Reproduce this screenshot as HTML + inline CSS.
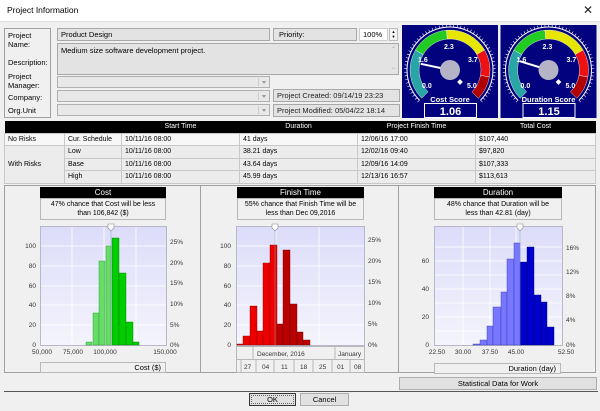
<!DOCTYPE html>
<html><head><meta charset="utf-8"><style>
*{box-sizing:border-box;margin:0;padding:0}
body{width:600px;height:411px;background:#f0f0f0;font-family:"Liberation Sans",Arial,sans-serif;font-size:7.5px;color:#000;position:relative;overflow:hidden}
.a{position:absolute}
.fld{position:absolute;background:#e3e3e3;border:1px solid #a8a8a8;padding:1px 3px;white-space:nowrap}
.cmb{position:absolute;background:#e8e8e8;border:1px solid #b0b0b0}
.cmb:after{content:"";position:absolute;right:1px;top:1px;bottom:1px;width:9px;border-left:1px solid #ccc}
.cmb i{position:absolute;right:3px;top:4px;border:2.5px solid transparent;border-top:3px solid #999}
table{border-collapse:collapse;position:absolute;left:4px;top:121px;width:592px;font-size:7px}
td{border:1px solid #c8c8c8;padding:0 3px;height:12.5px;background:#ececec;white-space:nowrap}
th{background:#000;color:#fff;font-weight:normal;height:12px;text-align:center}
.pan{position:absolute;top:185px;height:188px;border:1px solid #a0a0a0;background:#f0f0f0}
.tt{position:absolute;background:#000;color:#fff;text-align:center;height:11px;line-height:11px;font-size:8px}
.tx{position:absolute;background:#f0f0f0;border:1px solid #b8b8b8;text-align:center;font-size:7px;line-height:9px;padding-top:1px}
.btn{position:absolute;background:#e1e1e1;border:1px solid #adadad;text-align:center;font-size:7.5px;line-height:11px}
</style></head><body>
<div class="a" style="left:0;top:0;width:600px;height:21px;background:#fff"></div>
<div class="a" style="left:7px;top:5px;font-size:8.5px">Project Information</div>
<div class="a" style="left:583px;top:3px;font-size:12px;color:#222">✕</div>
<div class="a" style="left:0;top:21px;width:600px;height:1px;background:#e0e0e0"></div>

<div class="a" style="left:4px;top:28px;width:47px;height:90px;border:1px solid #a0a0a0"></div>
<div class="a" style="left:8px;top:32px;line-height:8.5px">Project<br>Name:</div>
<div class="a" style="left:8px;top:58px">Description:</div>
<div class="a" style="left:8px;top:73px;line-height:8.5px">Project<br>Manager:</div>
<div class="a" style="left:8px;top:93px">Company:</div>
<div class="a" style="left:8px;top:106px">Org.Unit</div>

<div class="fld" style="left:57px;top:28px;width:213px;height:13px">Product Design</div>
<div class="fld" style="left:273px;top:28px;width:84px;height:13px;padding-left:5px">Priority:</div>
<div class="fld" style="left:359px;top:28px;width:29px;height:13px;background:#fff;border-color:#ccc">100%</div>
<div class="a" style="left:389px;top:28px;width:9px;height:13px;border:1px solid #bbb;background:#f4f4f4;font-size:4px;line-height:5px;text-align:center">▲<br>▼</div>
<div class="fld" style="left:57px;top:43px;width:342px;height:32px;padding-top:2px">Medium size software development project.</div>
<div class="a" style="left:391px;top:46px;color:#aaa;font-size:6px">⌃</div>
<div class="a" style="left:391px;top:64px;color:#aaa;font-size:6px">⌄</div>
<div class="cmb" style="left:57px;top:76px;width:213px;height:12px"><i></i></div>
<div class="cmb" style="left:57px;top:90px;width:213px;height:12px"><i></i></div>
<div class="cmb" style="left:57px;top:104px;width:213px;height:12px"><i></i></div>
<div class="fld" style="left:273px;top:89px;width:127px;height:13px;color:#222">Project Created: 09/14/19 23:23</div>
<div class="fld" style="left:273px;top:104px;width:127px;height:13px;color:#222">Project Modified: 05/04/22 18:14</div>

<svg class="a" style="left:402px;top:25px" width="96" height="93" viewBox="0 0 96 93">
<rect width="96" height="93" fill="#02027e"/>
<path d="M17.6 75.4A43 43 0 1 1 78.4 75.4" fill="none" stroke="#fff" stroke-width="1"/>
<path d="M16.5 76.5A44.5 44.5 0 1 1 79.5 76.5" fill="none" stroke="#fff" stroke-width="2.5" stroke-dasharray="0.6 3"/>
<path d="M19.7 73.3A40 40 0 0 1 13.4 25L21.2 29.5A31 31 0 0 0 26.1 66.9Z" fill="#2aa5a5" stroke="#fff" stroke-width=".4"/>
<path d="M13.4 25A40 40 0 0 1 44.5 5.2L45.3 14.1A31 31 0 0 0 21.2 29.5Z" fill="#22cc22" stroke="#fff" stroke-width=".4"/>
<path d="M44.5 5.2A40 40 0 0 1 82.6 25L74.8 29.5A31 31 0 0 0 45.3 14.1Z" fill="#e6e600" stroke="#fff" stroke-width=".4"/>
<path d="M82.6 25A40 40 0 0 1 87.4 52L78.5 50.4A31 31 0 0 0 74.8 29.5Z" fill="#ee1111" stroke="#fff" stroke-width=".4"/>
<path d="M87.4 52A40 40 0 0 1 76.3 73.3L69.9 66.9A31 31 0 0 0 78.5 50.4Z" fill="#b00000" stroke="#fff" stroke-width=".4"/>
<g fill="#fff" font-size="7" font-weight="bold" font-family="Liberation Sans"><text x="20" y="63">0.0</text><text x="16" y="37">1.6</text><text x="42" y="24">2.3</text><text x="66" y="37">3.7</text><text x="65" y="63">5.0</text></g>
<line x1="48" y1="45" x2="18.7" y2="38.8" stroke="#fff" stroke-width="2"/>
<circle cx="48" cy="45" r="10" fill="#b4b4c6"/>
<rect x="56" y="55" width="4" height="4" fill="#fff" transform="rotate(45 58 57)"/>
<text x="48" y="77" fill="#fff" font-size="7.5" font-weight="bold" text-anchor="middle" font-family="Liberation Sans">Cost Score</text>
<rect x="22.5" y="78.5" width="52" height="14" fill="#02027e" stroke="#fff"/>
<text x="48.5" y="90" fill="#fff" font-size="11" font-weight="bold" text-anchor="middle" font-family="Liberation Sans">1.06</text>
</svg>
<svg class="a" style="left:500px;top:25px" width="97" height="93" viewBox="0 0 96 93">
<rect width="96" height="93" fill="#02027e"/>
<path d="M17.6 75.4A43 43 0 1 1 78.4 75.4" fill="none" stroke="#fff" stroke-width="1"/>
<path d="M16.5 76.5A44.5 44.5 0 1 1 79.5 76.5" fill="none" stroke="#fff" stroke-width="2.5" stroke-dasharray="0.6 3"/>
<path d="M19.7 73.3A40 40 0 0 1 13.4 25L21.2 29.5A31 31 0 0 0 26.1 66.9Z" fill="#2aa5a5" stroke="#fff" stroke-width=".4"/>
<path d="M13.4 25A40 40 0 0 1 44.5 5.2L45.3 14.1A31 31 0 0 0 21.2 29.5Z" fill="#22cc22" stroke="#fff" stroke-width=".4"/>
<path d="M44.5 5.2A40 40 0 0 1 82.6 25L74.8 29.5A31 31 0 0 0 45.3 14.1Z" fill="#e6e600" stroke="#fff" stroke-width=".4"/>
<path d="M82.6 25A40 40 0 0 1 87.4 52L78.5 50.4A31 31 0 0 0 74.8 29.5Z" fill="#ee1111" stroke="#fff" stroke-width=".4"/>
<path d="M87.4 52A40 40 0 0 1 76.3 73.3L69.9 66.9A31 31 0 0 0 78.5 50.4Z" fill="#b00000" stroke="#fff" stroke-width=".4"/>
<g fill="#fff" font-size="7" font-weight="bold" font-family="Liberation Sans"><text x="20" y="63">0.0</text><text x="16" y="37">1.6</text><text x="42" y="24">2.3</text><text x="66" y="37">3.7</text><text x="65" y="63">5.0</text></g>
<line x1="48" y1="45" x2="19.3" y2="36.2" stroke="#fff" stroke-width="2"/>
<circle cx="48" cy="45" r="10" fill="#b4b4c6"/>
<rect x="56" y="55" width="4" height="4" fill="#fff" transform="rotate(45 58 57)"/>
<text x="48" y="77" fill="#fff" font-size="7.5" font-weight="bold" text-anchor="middle" font-family="Liberation Sans">Duration Score</text>
<rect x="22.5" y="78.5" width="52" height="14" fill="#02027e" stroke="#fff"/>
<text x="48.5" y="90" fill="#fff" font-size="11" font-weight="bold" text-anchor="middle" font-family="Liberation Sans">1.15</text>
</svg>

<table>
<tr><th style="width:60px;text-align:left"></th><th style="width:57px"></th><th style="width:118px">Start Time</th><th style="width:118px">Duration</th><th style="width:118px">Project Finish Time</th><th>Total Cost</th></tr>
<tr><td style="background:#f7f7f7">No Risks</td><td style="background:#f7f7f7">Cur. Schedule</td><td style="background:#f7f7f7">10/11/16 08:00</td><td style="background:#f7f7f7">41 days</td><td style="background:#f7f7f7">12/06/16 17:00</td><td style="background:#f7f7f7">$107,440</td></tr>
<tr><td rowspan="3">With Risks</td><td>Low</td><td>10/11/16 08:00</td><td>38.21 days</td><td>12/02/16 09:40</td><td>$97,820</td></tr>
<tr><td>Base</td><td>10/11/16 08:00</td><td>43.64 days</td><td>12/09/16 14:09</td><td>$107,333</td></tr>
<tr><td>High</td><td>10/11/16 08:00</td><td>45.99 days</td><td>12/13/16 16:57</td><td>$113,613</td></tr>
</table>

<div class="pan" style="left:4px;width:197px"></div>
<div class="pan" style="left:200px;width:199px"></div>
<div class="pan" style="left:398px;width:198px"></div>

<div class="tt" style="left:40px;top:187px;width:126px">Cost</div>
<div class="tx" style="left:40px;top:198px;width:126px;height:22px">47% chance that Cost will be less<br>than 106,842 ($)</div>
<div class="tt" style="left:237px;top:187px;width:127px">Finish Time</div>
<div class="tx" style="left:237px;top:198px;width:127px;height:22px">55% chance that Finish Time will be<br>less than Dec 09,2016</div>
<div class="tt" style="left:434px;top:187px;width:128px">Duration</div>
<div class="tx" style="left:434px;top:198px;width:128px;height:22px">48% chance that Duration will be<br>less than 42.81 (day)</div>

<svg class="a" style="left:0;top:220px" width="600" height="160" font-family="Liberation Sans" font-size="6.5">
<defs><linearGradient id="bg" x1="0" y1="0" x2="0" y2="1"><stop offset="0" stop-color="#dcdcfa"/><stop offset="1" stop-color="#f4f4fc"/></linearGradient></defs>
<!-- cost -->
<rect x="40.5" y="6.5" width="126" height="119" fill="url(#bg)" stroke="#b8b8c8"/>
<g stroke="#fff" stroke-width=".8"><path d="M72 7V125M104 7V125M136 7V125M41 105H166M41 85H166M41 66H166M41 46H166M41 26H166"/></g>
<g fill="#66dd66" stroke="#229922" stroke-width=".4"><rect x="86" y="122" width="6" height="3"/><rect x="93" y="93" width="6" height="32"/><rect x="99" y="41" width="6" height="84"/><rect x="106" y="26" width="5" height="99"/></g>
<g fill="#00cc00" stroke="#007700" stroke-width=".4"><rect x="112" y="18" width="7" height="107"/><rect x="119" y="53" width="7" height="72"/><rect x="126" y="102" width="7" height="23"/><rect x="133" y="122" width="6" height="3"/></g>
<line x1="111" y1="7" x2="111" y2="125" stroke="#8ab" stroke-width=".5"/>
<path d="M108 4h6v4l-3 3l-3-3z" fill="#fff" stroke="#888" stroke-width=".6"/>
<g text-anchor="end" fill="#333"><text x="36" y="127">0</text><text x="36" y="107">20</text><text x="36" y="87">40</text><text x="36" y="68">60</text><text x="36" y="48">80</text><text x="36" y="28">100</text></g>
<g fill="#333"><text x="170" y="127">0%</text><text x="170" y="107">5%</text><text x="170" y="86">10%</text><text x="170" y="65">15%</text><text x="170" y="45">20%</text><text x="170" y="24">25%</text></g>
<g text-anchor="middle" fill="#333"><text x="42" y="134">50,000</text><text x="73" y="134">75,000</text><text x="105" y="134">100,000</text><text x="165" y="134">150,000</text></g>
<!-- finish -->
<rect x="236.5" y="6.5" width="128" height="119" fill="url(#bg)" stroke="#b8b8c8"/>
<g stroke="#fff" stroke-width=".8"><path d="M237 105H364M237 85H364M237 66H364M237 46H364M237 26H364M276 7V125M319 7V125"/></g>
<g fill="#ee0000" stroke="#880000" stroke-width=".4"><rect x="237" y="124" width="6" height="1"/><rect x="243" y="116" width="7" height="9"/><rect x="250" y="86" width="7" height="39"/><rect x="257" y="111" width="6" height="14"/><rect x="263" y="43" width="7" height="82"/><rect x="270" y="25" width="7" height="100"/></g>
<g fill="#bb0000" stroke="#660000" stroke-width=".4"><rect x="277" y="104" width="6" height="21"/><rect x="283" y="30" width="7" height="95"/><rect x="290" y="84" width="7" height="41"/><rect x="297" y="112" width="6" height="13"/><rect x="303" y="120" width="7" height="5"/></g>
<line x1="275" y1="7" x2="275" y2="125" stroke="#8ab" stroke-width=".5"/>
<path d="M272 4h6v4l-3 3l-3-3z" fill="#fff" stroke="#888" stroke-width=".6"/>
<g text-anchor="end" fill="#333"><text x="231" y="127">0</text><text x="231" y="107">20</text><text x="231" y="87">40</text><text x="231" y="68">60</text><text x="231" y="48">80</text><text x="231" y="28">100</text></g>
<g fill="#333"><text x="368" y="127">0%</text><text x="368" y="106">5%</text><text x="368" y="85">10%</text><text x="368" y="64">15%</text><text x="368" y="43">20%</text><text x="368" y="22">25%</text></g>
<rect x="236.5" y="126.5" width="128" height="13" fill="#f0f0f0" stroke="#b8b8b8"/>
<rect x="236.5" y="139.5" width="128" height="13" fill="#f0f0f0" stroke="#b8b8b8"/>
<g stroke="#b8b8b8"><path d="M253 127V139M335 127V139M241 140V152M256 140V152M274 140V152M294 140V152M313 140V152M332 140V152M350 140V152"/></g>
<g fill="#333"><text x="257" y="136">December, 2016</text><text x="338" y="136">January</text><text x="244" y="149">27</text><text x="262" y="149">04</text><text x="281" y="149">11</text><text x="300" y="149">18</text><text x="319" y="149">25</text><text x="337" y="149">01</text><text x="354" y="149">08</text></g>
<!-- duration -->
<rect x="434.5" y="6.5" width="128" height="119" fill="url(#bg)" stroke="#b8b8c8"/>
<g stroke="#fff" stroke-width=".8"><path d="M463 7V125M490 7V125M516 7V125M435 111H562M435 97H562M435 83H562M435 69H562M435 55H562M435 41H562M435 27H562"/></g>
<g fill="#7777ff" stroke="#3333aa" stroke-width=".4"><rect x="473" y="124" width="7" height="1"/><rect x="480" y="120" width="7" height="5"/><rect x="487" y="106" width="6" height="19"/><rect x="493" y="87" width="8" height="38"/><rect x="501" y="72" width="6" height="53"/><rect x="507" y="39" width="7" height="86"/><rect x="514" y="23" width="6" height="102"/></g>
<g fill="#0000cc" stroke="#000066" stroke-width=".4"><rect x="520" y="42" width="7" height="83"/><rect x="527" y="27" width="7" height="98"/><rect x="534" y="75" width="7" height="50"/><rect x="541" y="82" width="6" height="43"/><rect x="547" y="107" width="7" height="18"/></g>
<line x1="520" y1="7" x2="520" y2="125" stroke="#8ab" stroke-width=".5"/>
<path d="M517 4h6v4l-3 3l-3-3z" fill="#fff" stroke="#888" stroke-width=".6"/>
<g text-anchor="end" fill="#333"><text x="429" y="127">0</text><text x="429" y="99">20</text><text x="429" y="71">40</text><text x="429" y="43">60</text></g>
<g fill="#333"><text x="566" y="127">0%</text><text x="566" y="102">4%</text><text x="566" y="78">8%</text><text x="566" y="54">12%</text><text x="566" y="30">16%</text></g>
<g text-anchor="middle" fill="#333"><text x="437" y="134">22.50</text><text x="463" y="134">30.00</text><text x="490" y="134">37.50</text><text x="516" y="134">45.00</text><text x="566" y="134">52.50</text></g>
</svg>

<div class="tx" style="left:40px;top:362px;width:126px;height:11px;text-align:right;padding-right:4px;line-height:8px;font-size:7.5px">Cost ($)</div>
<div class="tx" style="left:434px;top:363px;width:127px;height:11px;text-align:right;padding-right:4px;line-height:8px;font-size:7.5px">Duration (day)</div>
<div class="btn" style="left:399px;top:377px;width:198px;height:13px">Statistical Data for Work</div>
<div class="a" style="left:4px;top:391px;width:594px;height:1px;background:#555"></div>
<div class="btn" style="left:249px;top:393px;width:47px;height:13px;border:1px solid #333;outline:1px dotted #666;outline-offset:-3px">OK</div>
<div class="btn" style="left:300px;top:393px;width:49px;height:13px">Cancel</div>
</body></html>
